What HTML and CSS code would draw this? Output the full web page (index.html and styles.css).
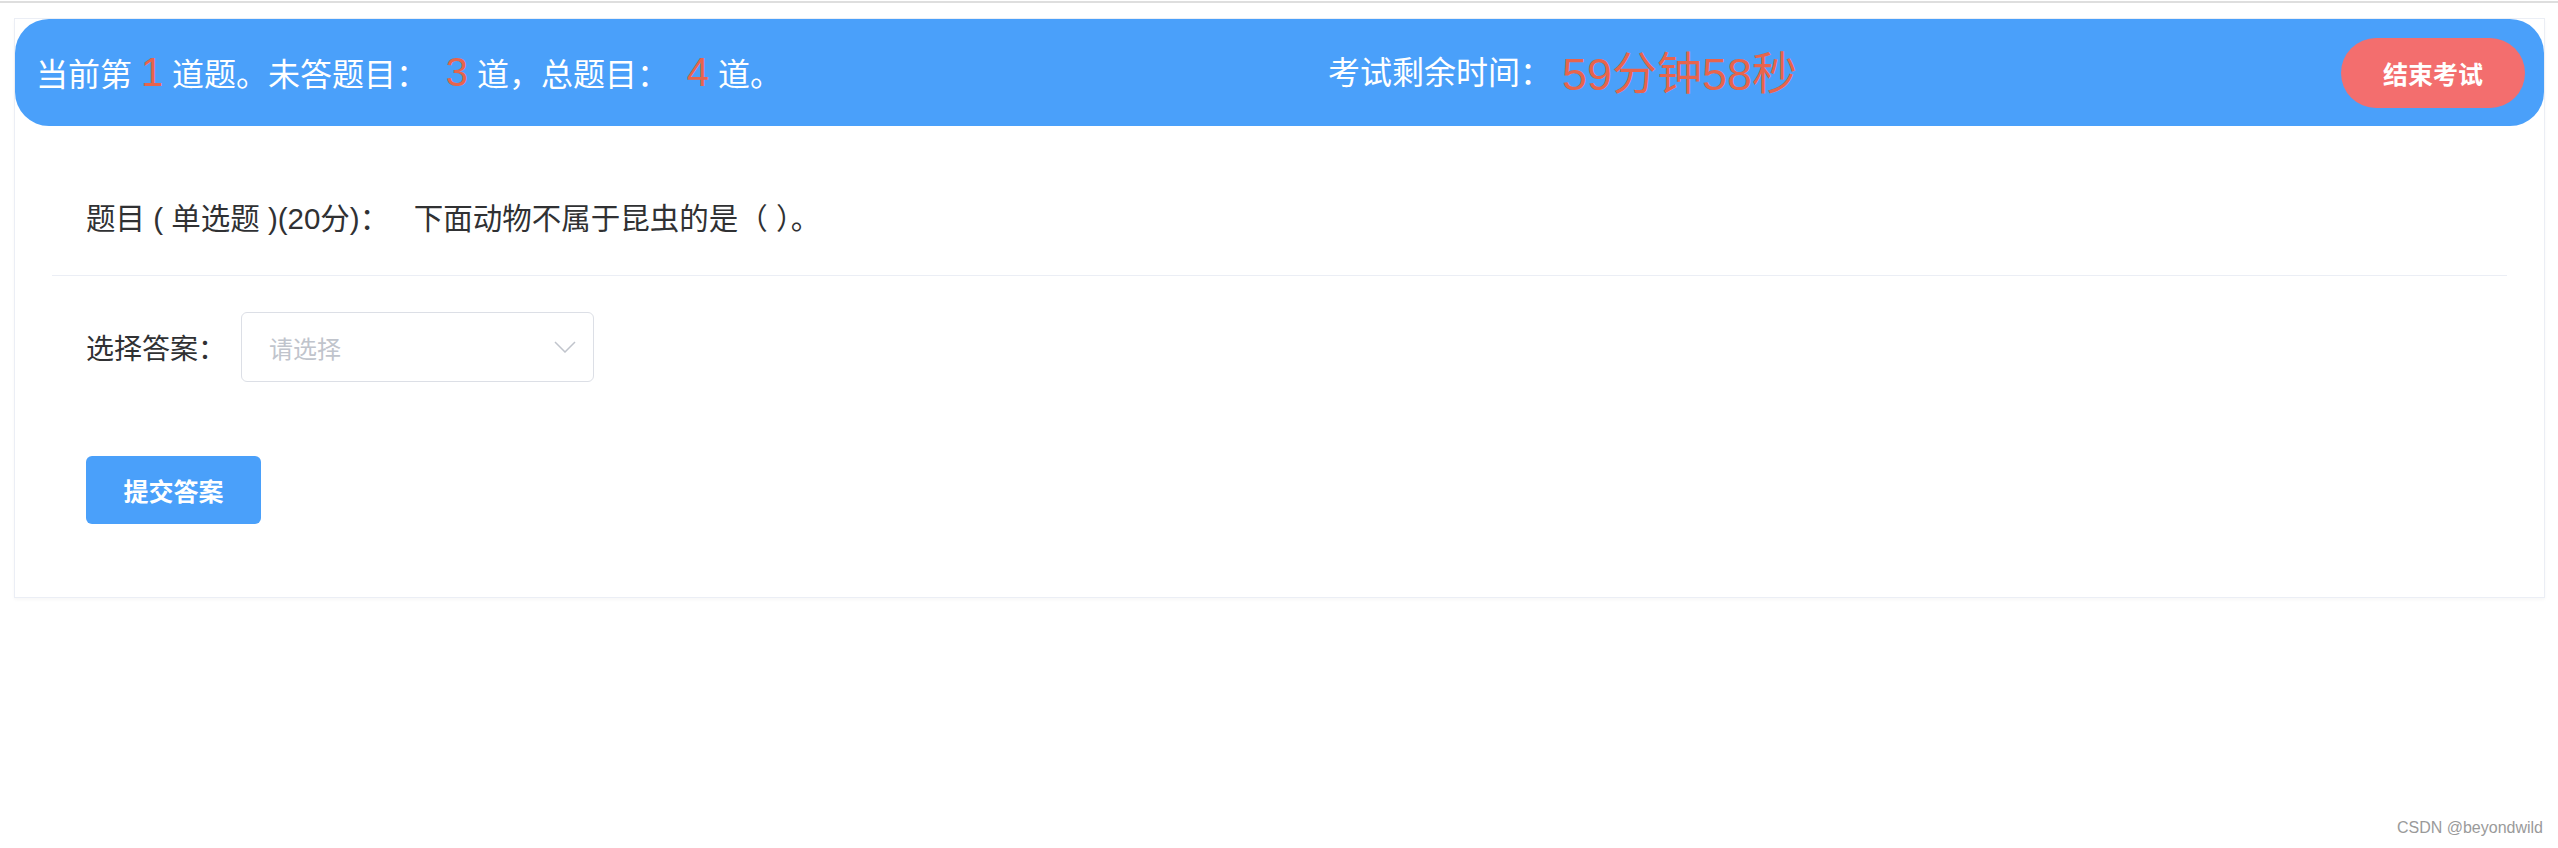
FILE: index.html
```html
<!DOCTYPE html>
<html lang="zh-CN">
<head>
<meta charset="utf-8">
<title>考试</title>
<link rel="stylesheet" href="styles.css">
</head>
<body>
<div class="topline"></div>
<div class="card">
  <div class="header">
    <div class="progress">当前第 <span class="num">1</span> 道题。未答题目：&nbsp;&nbsp;<span class="num">3</span> 道，总题目：&nbsp;&nbsp;<span class="num">4</span> 道。</div>
    <div class="timer"><span class="timer-label">考试剩余时间：</span><span class="countdown">59分钟58秒</span></div>
    <button class="end-btn">结束考试</button>
  </div>
  <div class="body">
    <div class="question">题目 ( 单选题 )(20分)：&nbsp;&nbsp; 下面动物不属于昆虫的是（&nbsp;）。</div>
    <div class="answer-row">
      <span class="label">选择答案：</span>
      <div class="select">
        <span class="placeholder">请选择</span>
        <svg class="chevron" width="22" height="12" viewBox="0 0 22 12"><polyline points="1,1 11,11 21,1" fill="none" stroke="#c0c4cc" stroke-width="1.5"/></svg>
      </div>
    </div>
    <div class="actions">
      <button class="submit-btn">提交答案</button>
    </div>
  </div>
</div>
<div class="watermark">CSDN @beyondwild</div>
</body>
</html>
```

FILE: styles.css
```css
html, body {
  margin: 0;
  padding: 0;
  background: #ffffff;
}
body {
  font-family: "Liberation Sans", "Noto Sans CJK SC", sans-serif;
  position: relative;
  min-height: 848px;
}
.topline {
  height: 2px;
  margin-top: 1px;
  background: #dedede;
}
.card {
  margin: 15px 13px 0 14px;
  border: 1px solid #ebeef5;
  box-shadow: 0 2px 3px rgba(0, 0, 0, 0.03);
  background: #fff;
}
.header {
  height: 107px;
  background: #4aa0fa;
  border-radius: 34px;
  display: grid;
  grid-template-columns: 1313px 1fr auto;
  align-items: center;
  color: #fff;
}
.progress {
  padding-left: 21px;
  font-size: 32px;
  white-space: nowrap;
  margin-bottom: 2px;
}
.num {
  font-size: 40px;
  color: #e8644c;
  line-height: 1;
}
.timer {
  display: flex;
  align-items: center;
  white-space: nowrap;
  margin-bottom: 5px;
}
.timer-label {
  font-size: 32px;
}
.countdown {
  font-size: 45px;
  color: #e8644c;
  margin-left: 10px;
}
.end-btn {
  margin-right: 19px;
  width: 184px;
  height: 70px;
  border: none;
  border-radius: 35px;
  background: #f36e6e;
  color: #fff;
  font-family: "Liberation Sans", "Noto Sans CJK SC", sans-serif;
  font-size: 25px;
  font-weight: 700;
  padding: 0;
}
.body {
  padding: 0 37px;
}
.question {
  padding: 73px 34px 36px;
  line-height: 40px;
  font-size: 29.5px;
  color: #303133;
  border-bottom: 1px solid #ebeef5;
  white-space: nowrap;
}
.answer-row {
  padding: 36px 34px 0;
  display: flex;
  align-items: center;
}
.label {
  font-size: 28px;
  color: #303133;
  width: 155px;
}
.select {
  width: 353px;
  height: 70px;
  box-sizing: border-box;
  border: 1px solid #dcdfe6;
  border-radius: 6px;
  display: flex;
  align-items: center;
  justify-content: space-between;
  padding: 0 17px 0 27px;
}
.placeholder {
  font-size: 24px;
  color: #c0c4cc;
}
.chevron {
  display: block;
}
.actions {
  padding: 74px 34px 73px;
}
.submit-btn {
  display: block;
  width: 175px;
  height: 68px;
  border: none;
  border-radius: 6px;
  background: #4aa0fa;
  color: #fff;
  font-family: "Liberation Sans", "Noto Sans CJK SC", sans-serif;
  font-size: 25px;
  font-weight: 700;
  padding: 0;
}
.watermark {
  position: absolute;
  right: 15px;
  top: 819px;
  font-size: 16px;
  color: #9a9a9a;
}
```
